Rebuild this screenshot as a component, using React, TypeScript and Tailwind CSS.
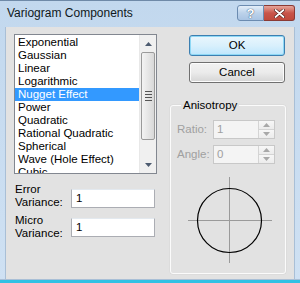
import React from "react";

const models = [
  "Exponential",
  "Gaussian",
  "Linear",
  "Logarithmic",
  "Nugget Effect",
  "Power",
  "Quadratic",
  "Rational Quadratic",
  "Spherical",
  "Wave (Hole Effect)",
  "Cubic",
];

function Arrow({ up, color = "#4d5b70" }: { up?: boolean; color?: string }) {
  return (
    <svg width="7" height="4" viewBox="0 0 7 4">
      {up ? <path d="M0 4 L3.5 0 L7 4 Z" fill={color} /> : <path d="M0 0 L3.5 4 L7 0 Z" fill={color} />}
    </svg>
  );
}

function Spinner() {
  return (
    <div className="flex flex-col w-[16px] h-full border-l border-[#d4d4d4]">
      <div className="flex-1 flex items-center justify-center bg-gradient-to-b from-[#f7f7f7] to-[#ececec] border-b border-[#d4d4d4]">
        <Arrow up color="#a8a8a8" />
      </div>
      <div className="flex-1 flex items-center justify-center bg-gradient-to-b from-[#f7f7f7] to-[#ececec]">
        <Arrow color="#a8a8a8" />
      </div>
    </div>
  );
}

export default function App() {
  const font = { fontFamily: '"Liberation Sans", Arial, sans-serif' };
  return (
    <div
      className="w-[300px] h-[283px] flex flex-col overflow-hidden bg-gradient-to-b from-[#c2d8ee] to-[#cfe1f3] text-[11.5px] text-black"
      style={font}
    >
      {/* title bar */}
      <div className="h-[27px] flex items-start border-t border-[#6f8aa8]">
        <div className="pl-[7px] pt-[4px] text-[12px] leading-[16px] text-[#101820]">Variogram Components</div>
        <div className="ml-auto mr-[5px] mt-[4px] flex">
          <div className="w-[27px] h-[16px] rounded-l-[3px] border border-[#6b8bb0] bg-gradient-to-b from-[#e3eef9] via-[#bcd2ea] to-[#a9c4e3] flex items-center justify-center">
            <span className="text-[13px] font-bold leading-none text-white [text-shadow:0_0_1px_#3b5675,0_0_1px_#3b5675]">?</span>
          </div>
          <div className="w-[31px] h-[16px] rounded-r-[3px] border border-l-0 border-[#8a3a34] bg-gradient-to-b from-[#e5a59b] via-[#c8554a] to-[#c04a3c] flex items-center justify-center">
            <svg width="11" height="9" viewBox="0 0 11 9">
              <path d="M1.5 1 L9.5 8 M9.5 1 L1.5 8" stroke="#4a1a14" strokeWidth="3" strokeLinecap="round" />
              <path d="M1.5 1 L9.5 8 M9.5 1 L1.5 8" stroke="#ffffff" strokeWidth="1.8" strokeLinecap="round" />
            </svg>
          </div>
        </div>
      </div>

      {/* client area */}
      <div className="mx-[5px] h-[252px] bg-[#e2e2e2] border-l border-r border-[#a9bfd6] flex pt-[7px] pl-[8px]">
        {/* left column */}
        <div className="w-[143px] flex flex-col">
          <div className="h-[140px] border border-[#828790] bg-white flex">
            <div className="flex-1 overflow-hidden pt-[1px]">
              {models.map((m) => (
                <div
                  key={m}
                  className={`h-[13px] leading-[13px] pl-[3px] whitespace-nowrap ${
                    m === "Nugget Effect" ? "bg-[#3399ff] text-white" : ""
                  }`}
                >
                  {m}
                </div>
              ))}
            </div>
            {/* scrollbar */}
            <div className="w-[17px] bg-[#f0f0f0] flex flex-col border-l border-[#e8e8e8]">
              <div className="h-[17px] flex items-center justify-center">
                <Arrow up />
              </div>
              <div className="mx-[1px] h-[88px] rounded-[2px] border border-[#9a9a9a] bg-gradient-to-r from-[#f3f3f3] via-[#e6e6e6] to-[#d8d8d8] flex flex-col items-center justify-center gap-[2px]">
                <div className="w-[7px] h-[1px] bg-[#555]" />
                <div className="w-[7px] h-[1px] bg-[#555]" />
                <div className="w-[7px] h-[1px] bg-[#555]" />
                <div className="w-[7px] h-[1px] bg-[#555]" />
              </div>
              <div className="flex-1" />
              <div className="h-[17px] flex items-center justify-center">
                <Arrow />
              </div>
            </div>
          </div>

          <div className="mt-[9px] flex items-start">
            <div className="w-[57px] pl-[1px] leading-[13px]">
              Error
              <br />
              Variance:
            </div>
            <div className="mt-[6px] w-[84px] h-[19px] bg-white border border-[#abadb3] border-t-[#e3e9ef] pl-[4px] leading-[17px]">
              1
            </div>
          </div>
          <div className="mt-[5px] flex items-start">
            <div className="w-[57px] pl-[1px] leading-[13px]">
              Micro
              <br />
              Variance:
            </div>
            <div className="mt-[4px] w-[84px] h-[19px] bg-white border border-[#abadb3] border-t-[#e3e9ef] pl-[4px] leading-[17px]">
              1
            </div>
          </div>
        </div>

        {/* right column */}
        <div className="ml-[13px] w-[116px] flex flex-col">
          <button className="ml-[19px] mt-[1px] w-[96px] h-[21px] rounded-[3px] border border-[#3c7fb1] bg-gradient-to-b from-[#eaf6fd] via-[#d9f0fc] to-[#bee6fd] shadow-[inset_0_0_0_1px_#8ed8f5] text-[11.5px] leading-[19px]">
            OK
          </button>
          <button className="ml-[19px] mt-[6px] w-[96px] h-[21px] rounded-[3px] border border-[#707070] bg-gradient-to-b from-[#f2f2f2] via-[#ebebeb] to-[#d5d5d5] shadow-[inset_0_0_0_1px_#fcfcfc] text-[11.5px] leading-[19px]">
            Cancel
          </button>

          <fieldset className="mt-[16px] h-[175px] border border-[#fbfbfb] rounded-[3px] pl-[6px] shadow-[0_0_0_0.5px_#d5d5d5]">
            <legend className="ml-[4px] px-[2px] leading-[13px] text-black">Anisotropy</legend>
            <div className="mt-[8px] flex items-center text-[#a0a0a0]">
              <div className="w-[36px]">Ratio:</div>
              <div className="w-[62px] h-[19px] border border-[#c8c8c8] bg-[#f4f4f4] flex">
                <div className="flex-1 pl-[3px] leading-[17px]">1</div>
                <Spinner />
              </div>
            </div>
            <div className="mt-[6px] flex items-center text-[#a0a0a0]">
              <div className="w-[36px]">Angle:</div>
              <div className="w-[62px] h-[19px] border border-[#c8c8c8] bg-[#f4f4f4] flex">
                <div className="flex-1 pl-[3px] leading-[17px]">0</div>
                <Spinner />
              </div>
            </div>
            <div className="mt-[13px] ml-[11px]">
              <svg width="84" height="86" viewBox="0 0 84 86">
                <line x1="0" y1="43.5" x2="84" y2="43.5" stroke="#9a9a9a" strokeWidth="1" />
                <line x1="41.5" y1="0" x2="41.5" y2="86" stroke="#9a9a9a" strokeWidth="1" />
                <circle cx="41.5" cy="43.5" r="32" fill="none" stroke="#000" strokeWidth="1.2" />
              </svg>
            </div>
          </fieldset>
        </div>
      </div>
      <div className="h-[1px] bg-[#a9bfd6]" />
      <div className="h-[3px] bg-[#33c1e4]" />
    </div>
  );
}
